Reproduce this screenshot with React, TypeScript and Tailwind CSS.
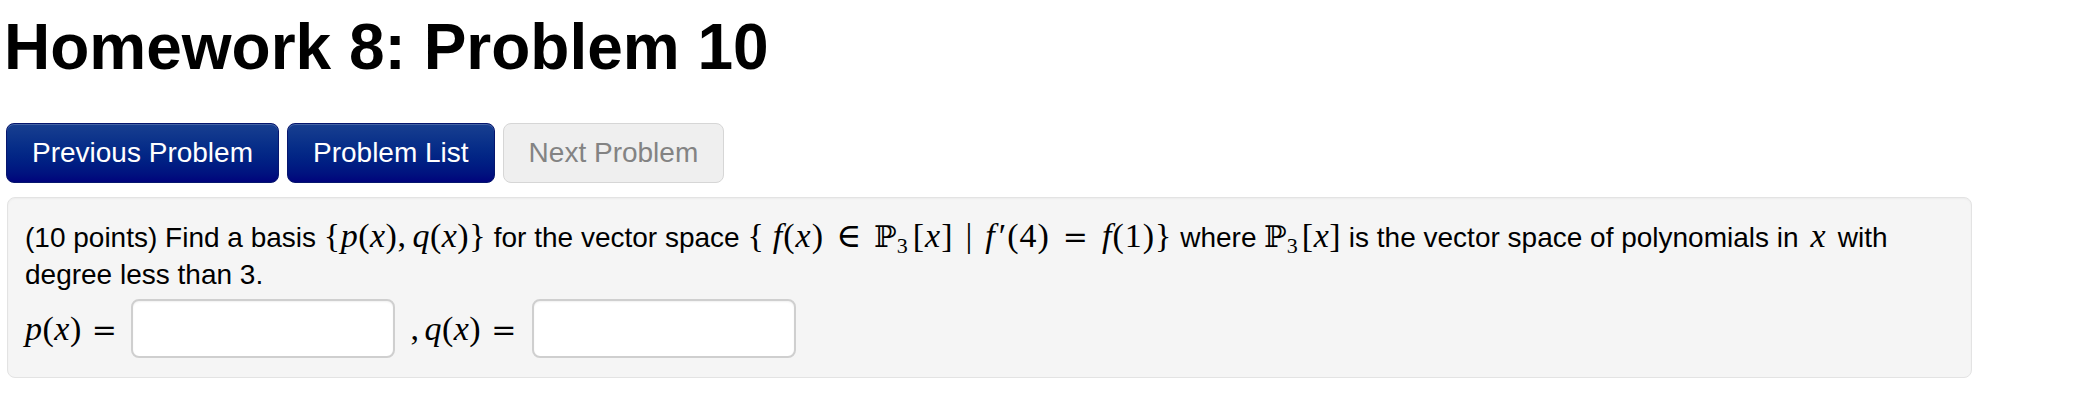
import type { ReactNode } from 'react';

const serif = "font-['Liberation_Serif','DejaVu_Serif',serif]";

function M({ children, className = '' }: { children: ReactNode; className?: string }) {
  return <span className={`${serif} text-[34px] leading-none tracking-[0.5px] ${className}`}>{children}</span>;
}

function Bb() {
  return <span className="font-['DejaVu_Serif',serif] text-[30px] not-italic tracking-normal">ℙ</span>;
}

function Sub({ children }: { children: ReactNode }) {
  return <span className="text-[22px] align-[-6px] tracking-normal">{children}</span>;
}

function Eq({ className = '' }: { className?: string }) {
  return <span className={`font-['DejaVu_Serif',serif] text-[30px] ${className}`}>=</span>;
}

function NavButton({ label, disabled }: { label: string; disabled?: boolean }) {
  return (
    <button
      disabled={disabled}
      className={
        disabled
          ? 'h-[60px] px-[25px] rounded-[8px] border border-[#d6d6d6] bg-[#efefef] text-[#838383] text-[28px] leading-[36px]'
          : 'h-[60px] px-[25px] rounded-[8px] border border-[#06166e] bg-linear-to-b from-[#183f90] to-[#00037c] text-white text-[28px] leading-[36px] shadow-[inset_0_1px_0_rgba(255,255,255,0.2)]'
      }
    >
      {label}
    </button>
  );
}

function AnswerBox() {
  return (
    <input
      type="text"
      className="w-[264px] h-[59px] rounded-[8px] border-2 border-[#cfcfcf] bg-white shadow-[inset_0_1px_2px_rgba(0,0,0,0.06)] outline-none"
    />
  );
}

export default function App() {
  return (
    <div className="w-[2076px] h-[400px] bg-white text-black font-['Liberation_Sans',Arial,sans-serif]">
      <h1 className="pl-[4px] pt-[12px] text-[64px] leading-[70px] font-bold">Homework 8: Problem 10</h1>

      <div className="mt-[41px] pl-[6px] flex gap-[8px]">
        <NavButton label="Previous Problem" />
        <NavButton label="Problem List" />
        <NavButton label="Next Problem" disabled />
      </div>

      <div className="mt-[14px] ml-[7px] w-[1965px] rounded-[8px] border border-[#e3e3e3] bg-[#f5f5f5] shadow-[inset_0_1px_2px_rgba(0,0,0,0.04)] pt-[21px] pb-[19px] pl-[17px] pr-[17px]">
        <p className="text-[28px] leading-[36px] whitespace-nowrap">
          (10 points) Find a basis{' '}
          <M>
            {'{'}<i>p</i>(<i>x</i>),<span className="ml-[6px]" /><i>q</i>(<i>x</i>){'}'}
          </M>{' '}
          for the vector space{' '}
          <M className="tracking-[1px]">
            {'{'}<i className="ml-[8px]">f</i>(<i>x</i>)<span className="mx-[12px]">∈</span><Bb /><Sub>3</Sub>
            <span className="ml-[5px]">[<i>x</i>]</span>
            <span className="mx-[12px]">|</span>
            <i>f</i><span className="ml-[3px]">′</span>(4)<Eq className="mx-[13px]" /><i>f</i>(1){'}'}
          </M>{' '}
          where{' '}
          <M>
            <Bb /><Sub>3</Sub><span className="ml-[4px]">[<i>x</i>]</span>
          </M>{' '}
          is the vector space of polynomials in <M className="mx-[4px]"><i>x</i></M> with
          <br />
          degree less than 3.
        </p>

        <div className="mt-[6px] flex items-center">
          <M className="mr-[14px]">
            <i>p</i>(<i>x</i>)<Eq className="ml-[10px]" />
          </M>
          <AnswerBox />
          <M className="ml-[15px] mr-[15px]">
            ,<span className="ml-[5px]" /><i>q</i>(<i>x</i>)<Eq className="ml-[10px]" />
          </M>
          <AnswerBox />
        </div>
      </div>
    </div>
  );
}
